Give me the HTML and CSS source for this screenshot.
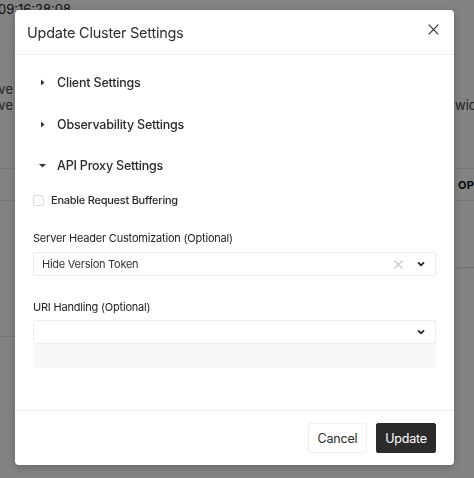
FILE: index.html
```html
<!DOCTYPE html>
<html lang="en">
<head>
<meta charset="utf-8">
<title>Update Cluster Settings</title>
<link rel="stylesheet" href="styles.css">
</head>
<body>
<div class="page">
  <div class="stamp">09:16:28:08</div>
  <div class="para">
    <div class="clip-left"><span>you have</span></div>
  </div>
  <div class="para2">
    <div class="clip-left"><span>move</span></div>
    <div class="clip-right"><span>wice per day</span></div>
  </div>
  <div class="thead"><span class="op">OP</span></div>
  <div class="chart-line"></div>
  <div class="left-line"></div>
</div>

<div class="overlay"></div>

<div class="modal" role="dialog" aria-label="Update Cluster Settings">
  <div class="modal-header">
    <h2 class="modal-title">Update Cluster Settings</h2>
    <button class="close-btn" aria-label="Close">
      <svg width="11" height="11" viewBox="0 0 11 11"><path d="M0.7 0.7L10.3 10.3M10.3 0.7L0.7 10.3" stroke="#333" stroke-width="1.2" fill="none"/></svg>
    </button>
  </div>

  <div class="modal-body">
    <div class="section-row">
      <svg class="caret" width="7" height="7" viewBox="0 0 7 7"><path d="M2 0.5L5.5 3.5L2 6.5Z" fill="#333"/></svg>
      <span>Client Settings</span>
    </div>
    <div class="section-row">
      <svg class="caret" width="7" height="7" viewBox="0 0 7 7"><path d="M2 0.5L5.5 3.5L2 6.5Z" fill="#333"/></svg>
      <span>Observability Settings</span>
    </div>
    <div class="section-row last">
      <svg class="caret" width="7" height="7" viewBox="0 0 7 7"><path d="M0 2L7 2L3.5 5.5Z" fill="#333"/></svg>
      <span>API Proxy Settings</span>
    </div>

    <label class="check-row">
      <span class="checkbox"></span>
      <span>Enable Request Buffering</span>
    </label>

    <div class="field-label first">Server Header Customization (Optional)</div>
    <div class="select">
      <span class="select-value">Hide Version Token</span>
      <svg class="clear" width="9" height="9" viewBox="0 0 9 9"><path d="M0.5 0.5L8.5 8.5M8.5 0.5L0.5 8.5" stroke="#c4c4c4" stroke-width="1.1" fill="none"/></svg>
      <svg class="chev" width="8" height="6" viewBox="0 0 8 6"><path d="M1 1.3L4 4.3L7 1.3" stroke="#222" stroke-width="1.8" fill="none"/></svg>
    </div>

    <div class="field-label">URI Handling (Optional)</div>
    <div class="select second">
      <span class="select-value"></span>
      <svg class="chev" width="8" height="6" viewBox="0 0 8 6"><path d="M1 1.3L4 4.3L7 1.3" stroke="#222" stroke-width="1.8" fill="none"/></svg>
    </div>
    <div class="select-extra"></div>
  </div>

  <div class="modal-footer">
    <button class="btn btn-cancel">Cancel</button>
    <button class="btn btn-primary">Update</button>
  </div>
</div>
</body>
</html>
```
FILE: styles.css
```css
* { box-sizing: border-box; }

html, body {
  margin: 0;
  padding: 0;
  width: 474px;
  height: 478px;
  overflow: hidden;
  font-family: Inter, "Noto Sans", "Liberation Sans", sans-serif;
  background: #ffffff;
  color: #222;
}

.page {
  width: 474px;
  height: 478px;
  position: relative;
  overflow: hidden;
}

.stamp {
  font-size: 13px;
  line-height: 16px;
  padding-top: 1px;
  margin-left: -2px;
  color: #222;
}

.para {
  margin-top: 64px;
  height: 16px;
  font-size: 13px;
  line-height: 16px;
  color: #444;
}

.para2 {
  display: flex;
  justify-content: space-between;
  height: 16px;
  font-size: 13px;
  line-height: 16px;
  color: #444;
}

.clip-left {
  width: 13px;
  overflow: hidden;
  display: flex;
  justify-content: flex-end;
  white-space: nowrap;
}

.clip-right {
  width: 19px;
  overflow: hidden;
  white-space: nowrap;
}

.thead {
  margin-top: 55px;
  height: 33px;
  border-top: 1px solid #e6e6e6;
  border-bottom: 1px solid #e6e6e6;
  display: flex;
  align-items: center;
  padding-left: 458px;
  white-space: nowrap;
}

.op {
  font-size: 11px;
  font-weight: 700;
  color: #111;
  letter-spacing: 0.3px;
}

.chart-line {
  margin-top: 66px;
  margin-left: 454px;
  width: 30px;
  height: 1px;
  background: #d8d8d8;
  transform: rotate(-4deg);
}

.left-line {
  margin-top: 68px;
  width: 20px;
  height: 1px;
  background: #e0e0e0;
}

.overlay {
  position: fixed;
  inset: 0;
  background: rgba(0, 0, 0, 0.485);
}

.modal {
  position: fixed;
  left: 15px;
  top: 10px;
  width: 439px;
  height: 455px;
  background: #fff;
  border-radius: 4px;
  box-shadow: 0 2px 8px rgba(0, 0, 0, 0.25);
  display: flex;
  flex-direction: column;
  overflow: hidden;
}

.modal-header {
  height: 45px;
  flex: none;
  border-bottom: 1px solid #efefef;
  display: flex;
  align-items: center;
  justify-content: space-between;
  padding: 0 14px 0 12px;
}

.modal-title {
  margin: 0;
  font-size: 14.5px;
  font-weight: 400;
  color: #2e2e2e;
  letter-spacing: -0.25px;
  padding-top: 1px;
}

.close-btn {
  border: 0;
  background: none;
  padding: 0;
  width: 14px;
  height: 14px;
  display: flex;
  align-items: center;
  justify-content: center;
  margin-top: -6px;
}

.modal-body {
  flex: 1;
  padding: 6px 18px 0 18px;
}

.section-row {
  height: 42px;
  display: flex;
  align-items: center;
  gap: 11px;
  padding-left: 6px;
  font-size: 12.5px;
  font-weight: 500;
  color: #2a2a2a;
  letter-spacing: -0.2px;
}

.section-row.last {
  height: 41px;
}

.caret {
  flex: none;
}

.check-row {
  margin-top: 7px;
  height: 14px;
  display: flex;
  align-items: center;
  gap: 7px;
  font-size: 11px;
  font-weight: 500;
  color: #2a2a2a;
  letter-spacing: -0.25px;
}

.checkbox {
  width: 11px;
  height: 11px;
  border: 1px solid #dcdcdc;
  border-radius: 2px;
  background: #fff;
  flex: none;
}

.field-label {
  margin-top: 23px;
  height: 16px;
  line-height: 16px;
  font-size: 11px;
  font-weight: 400;
  color: #222;
  letter-spacing: -0.2px;
}

.select {
  margin-top: 6px;
  height: 24px;
  border: 1px solid #ececec;
  border-radius: 2px;
  display: flex;
  align-items: center;
  padding: 0 10px 0 8px;
  background: #fff;
}

.select.second {
  margin-top: 5px;
}

.select-value {
  flex: 1;
  font-size: 11px;
  color: #333;
  letter-spacing: -0.25px;
}

.clear {
  margin-right: 14px;
}

.select-extra {
  height: 24px;
  background: #f8f8f8;
}

.modal-footer {
  flex: none;
  height: 55px;
  border-top: 1px solid #efefef;
  display: flex;
  justify-content: flex-end;
  align-items: flex-start;
  gap: 9px;
  padding: 12px 18px 0 0;
}

.btn {
  height: 30px;
  border-radius: 2px;
  font-family: Inter, "Noto Sans", "Liberation Sans", sans-serif;
  font-size: 12.5px;
  font-weight: 400;
  letter-spacing: -0.2px;
  padding: 0 8px;
  cursor: pointer;
}

.btn-cancel {
  width: 59px;
  background: #fff;
  border: 1px solid #f0f0f0;
  color: #2a2a2a;
}

.btn-primary {
  width: 60px;
  background: #2b2b2b;
  border: 1px solid #2b2b2b;
  color: #fff;
}
```
